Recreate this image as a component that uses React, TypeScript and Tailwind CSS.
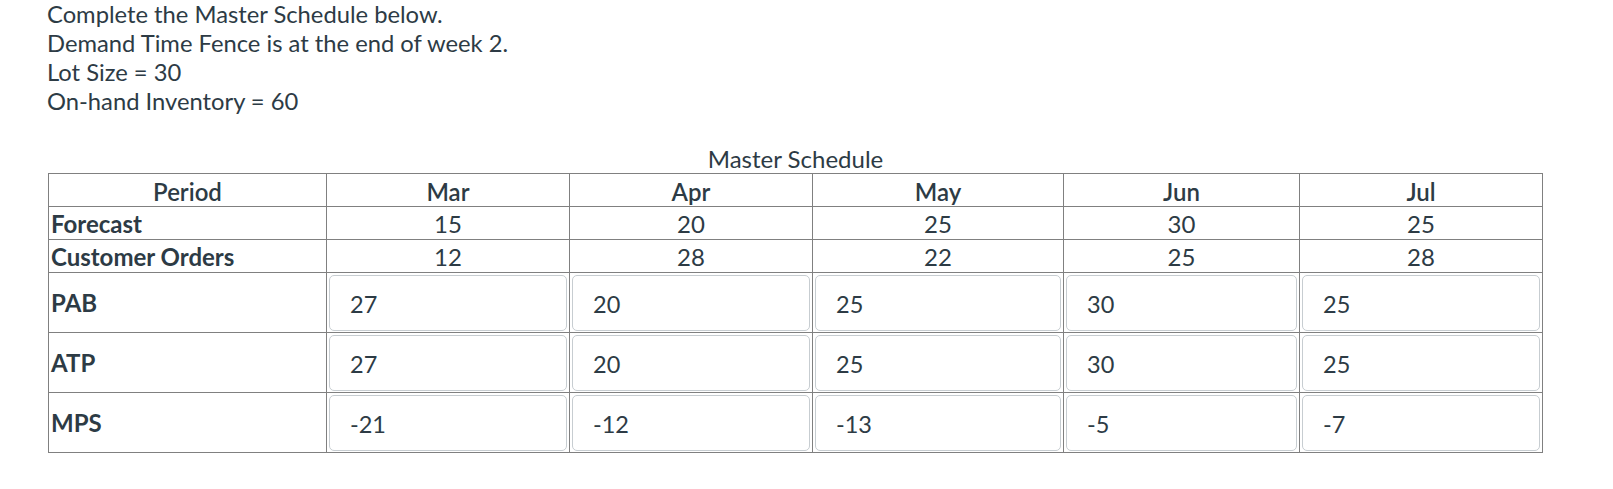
const MONTHS = ["Mar", "Apr", "May", "Jun", "Jul"];
const FORECAST = [15, 20, 25, 30, 25];
const ORDERS = [12, 28, 22, 25, 28];

const INPUT_ROWS = [
  { label: "PAB", values: ["27", "20", "25", "30", "25"] },
  { label: "ATP", values: ["27", "20", "25", "30", "25"] },
  { label: "MPS", values: ["-21", "-12", "-13", "-5", "-7"] },
];

const cell = "border border-[#808080] p-0";

export default function App() {
  return (
    <div
      className="min-h-screen bg-white pl-[48px] text-[#2d3b45]"
      style={{ fontFamily: "Lato, 'Open Sans', sans-serif" }}
    >
      {/* Problem statement */}
      <div className="text-[23.75px] leading-[29px] -ml-[1px]">
        <p>Complete the Master Schedule below.</p>
        <p>Demand Time Fence is at the end of week 2.</p>
        <p>Lot Size = 30</p>
        <p>On-hand Inventory = 60</p>
      </div>

      <table className="mt-[28px] w-[1494px] table-fixed border-collapse text-[24px]">
        <caption className="leading-[29px] text-center">Master Schedule</caption>
        <colgroup>
          <col className="w-[278px]" />
          <col className="w-[243px]" />
          <col className="w-[243px]" />
          <col className="w-[251px]" />
          <col className="w-[236px]" />
          <col className="w-[243px]" />
        </colgroup>
        <thead>
          <tr className="h-[33px]">
            <th className={`${cell} pt-[3px] font-semibold leading-[29px]`}>Period</th>
            {MONTHS.map((m) => (
              <th key={m} className={`${cell} pt-[3px] font-semibold leading-[29px]`}>
                {m}
              </th>
            ))}
          </tr>
        </thead>
        <tbody>
          <tr className="h-[33px]">
            <td className={`${cell} pl-[2px] pt-[1px] font-bold leading-[31px]`}>Forecast</td>
            {FORECAST.map((v, i) => (
              <td key={i} className={`${cell} pt-[1px] text-center leading-[31px]`}>
                {v}
              </td>
            ))}
          </tr>
          <tr className="h-[33px]">
            <td className={`${cell} pl-[2px] pt-[1px] font-bold leading-[31px]`}>Customer Orders</td>
            {ORDERS.map((v, i) => (
              <td key={i} className={`${cell} pt-[1px] text-center leading-[31px]`}>
                {v}
              </td>
            ))}
          </tr>
          {INPUT_ROWS.map((row) => (
            <tr key={row.label} className="h-[60px]">
              <td className={`${cell} pl-[2px] pt-[1px] font-bold`}>{row.label}</td>
              {row.values.map((v, i) => (
                <td key={i} className={`${cell} px-[2px] pt-[2px] pb-[1px] align-top`}>
                  <input
                    readOnly
                    value={v}
                    className="block h-[56px] w-full rounded-[5px] border border-[#c7cdd1] bg-white px-[20px] pt-[2px] text-[23.5px] text-[#2d3b45] outline-none"
                    style={{ fontFamily: "inherit" }}
                  />
                </td>
              ))}
            </tr>
          ))}
        </tbody>
      </table>
    </div>
  );
}
